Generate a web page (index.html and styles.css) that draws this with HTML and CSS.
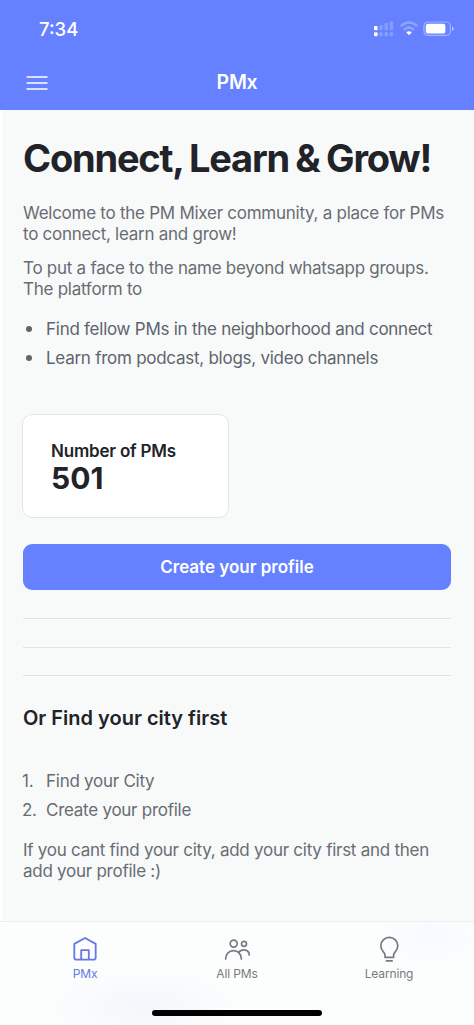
FILE: index.html
```
<!DOCTYPE html>
<html lang="en">
<head>
<meta charset="utf-8">
<title>PMx</title>
<link rel="stylesheet" href="styles.css">
</head>
<body>
<div class="app">
  <header class="header">
    <div class="status">
      <span class="time">7:34</span>
      <svg class="status-icons" width="84" height="20" viewBox="0 0 84 20" fill="none">
        <g fill="#fff">
          <rect x="1" y="6" width="3.6" height="4.2" rx="1"/>
          <rect x="1" y="12.2" width="3.6" height="4" rx="1"/>
          <g opacity=".22">
            <rect x="6.4" y="5" width="3.4" height="5.2" rx="1"/><rect x="6.4" y="12.2" width="3.4" height="4" rx="1"/>
            <rect x="11.6" y="3" width="3.4" height="7.2" rx="1"/><rect x="11.6" y="12.2" width="3.4" height="4" rx="1"/>
            <rect x="16.7" y="1.5" width="3.4" height="8.7" rx="1"/><rect x="16.7" y="12.2" width="3.4" height="4" rx="1"/>
          </g>
        </g>
        <path d="M27.8 6.2Q36 -1.3 44.2 6.2M31 9.9Q36 5.2 41 9.9" stroke="#fff" stroke-opacity=".28" stroke-width="2.4"/>
        <path d="M33.2 12.2Q36 10.2 38.8 12.2L36 15.2Z" fill="#fff"/>
        <rect x="51" y="2" width="26.4" height="13.4" rx="4" stroke="#fff" stroke-opacity=".4" stroke-width="1.2"/>
        <rect x="52.8" y="3.8" width="19.6" height="9.8" rx="2.2" fill="#fff"/>
        <path d="M79 6.3Q80.8 7 80.8 8.7T79 11.1Z" fill="#fff" opacity=".5"/>
      </svg>
    </div>
    <div class="nav">
      <svg class="menu" width="22" height="16" viewBox="0 0 22 16" stroke="#fff" stroke-width="1.7"><path d="M.5 2H21.5M.5 8H21.5M.5 14H21.5"/></svg>
      <span class="nav-title">PMx</span>
    </div>
  </header>
  <main class="content">
    <h1 class="title">Connect, Learn &amp; Grow!</h1>
    <p class="text">Welcome to the PM Mixer community, a place for PMs<br>to connect, learn and grow!</p>
    <p class="text">To put a face to the name beyond whatsapp groups.<br>The platform to</p>
    <ul class="list">
      <li><span class="marker"><i class="dot"></i></span><span>Find fellow PMs in the neighborhood and connect</span></li>
      <li><span class="marker"><i class="dot"></i></span><span>Learn from podcast, blogs, video channels</span></li>
    </ul>
    <section class="card">
      <div class="card-label">Number of PMs</div>
      <div class="card-value">501</div>
    </section>
    <button class="button">Create your profile</button>
    <div class="rules"><hr><hr><hr></div>
    <h2 class="subtitle">Or Find your city first</h2>
    <ol class="list steps">
      <li><span class="marker">1.</span><span>Find your City</span></li>
      <li><span class="marker">2.</span><span>Create your profile</span></li>
    </ol>
    <p class="text">If you cant find your city, add your city first and then<br>add your profile :)</p>
  </main>
  <nav class="tabs">
    <div class="tab-row">
      <a class="tab active">
        <svg width="28" height="28" viewBox="0 0 28 28" fill="none" stroke="currentColor" stroke-width="1.8" stroke-linejoin="round"><path d="M3.3 8.9 14 3 24.7 8.9V22.5Q24.7 24.7 22.5 24.7H5.5Q3.3 24.7 3.3 22.5ZM10.2 24.7V15.2H17.8V24.7"/></svg>
        <span>PMx</span>
      </a>
      <a class="tab">
        <svg width="28" height="28" viewBox="0 0 28 28" fill="none" stroke="currentColor" stroke-width="1.7" stroke-linecap="round"><circle cx="10.7" cy="8.6" r="3.5"/><circle cx="21" cy="8.8" r="2.5"/><path d="M2.6 24C2.6 19.2 5.7 15.7 10.5 15.7S18.4 19.2 18.4 24M15.8 17C20 13.4 26.2 14.7 26.2 20"/></svg>
        <span>All PMs</span>
      </a>
      <a class="tab">
        <svg width="28" height="28" viewBox="0 0 28 28" fill="none" stroke="currentColor" stroke-width="1.7" stroke-linejoin="round"><path d="M10 22.3V19.8C10 17.5 5.8 16 5.8 10.8A8.5 8.5 0 0 1 22.8 10.8C22.8 16 18.6 17.5 18.6 19.8V22.3ZM10.8 25.8H17.8"/></svg>
        <span>Learning</span>
      </a>
    </div>
    <div class="home-indicator"></div>
  </nav>
</div>
</body>
</html>
```
FILE: styles.css
```
* { box-sizing: border-box; }
body { margin: 0; font-family: Inter, "Liberation Sans", sans-serif; background: #fff; }
.app { width: 474px; height: 1025px; display: flex; flex-direction: column; overflow: hidden; }
.header { height: 110px; flex: none; background: #6681ff; color: #fff; }
.status { height: 56px; padding: 20px 17px 0 39px; display: flex; justify-content: space-between; }
.time { font-size: 18.5px; line-height: 18px; font-weight: 500; }
.nav { height: 54px; padding: 0 26px; display: grid; grid-template-columns: 22px 1fr 22px; align-items: center; }
.nav-title { margin-top: -2px; text-align: center; font-size: 19.5px; font-weight: 600; letter-spacing: -.3px; }
.content { flex: 1; margin-left: 2px; padding: 28px 23px 0 21px; background: #f7faf9; display: flex; flex-direction: column; }
.title { margin: 0 0 24px; font-size: 38px; line-height: 41px; font-weight: 700; letter-spacing: -1.2px; word-spacing: -1.4px; color: #212329; white-space: nowrap; }
.text { margin: 0 0 14px; font-size: 17px; line-height: 20.5px; letter-spacing: -.26px; color: #696c74; white-space: nowrap; }
.list { list-style: none; margin: 6px 0 0; padding: 0; font-size: 17px; line-height: 20.5px; letter-spacing: -.26px; color: #60646e; display: flex; flex-direction: column; gap: 8px; }
.list li { display: flex; white-space: nowrap; }
.marker { width: 24px; margin-left: -1px; flex: none; }
.dot { display: block; width: 6px; height: 6px; margin: 7px 0 0 4px; border-radius: 50%; background: #60646e; }
.card { width: 207px; height: 104px; margin: 46px 0 0 -1px; padding: 26px 28px; flex: none; background: #fff; border: 1px solid #e3e6e6; border-radius: 10px; color: #212329; }
.card-label { font-size: 17px; line-height: 20px; font-weight: 600; letter-spacing: -.2px; white-space: nowrap; }
.card-value { font-size: 30px; line-height: 34px; font-weight: 700; }
.button { height: 46px; margin: 26px 0 0; flex: none; border: 0; border-radius: 9px; background: #6681ff; color: #fff; font: 600 17px/20px Inter, sans-serif; }
.rules { margin-top: 28px; display: flex; flex-direction: column; gap: 27.5px; }
.rules hr { width: 100%; height: 1px; margin: 0; border: 0; background: #e1e4e4; }
.subtitle { margin: 29px 0 34px; font-size: 20px; line-height: 26px; font-weight: 600; color: #212329; }
.steps { margin: 6px 0 20px; color: #696c74; }
.tabs { height: 104px; flex: none; padding-top: 13px; border-top: 1px solid #eceff0; background: radial-gradient(ellipse 100px 40px at 145px 85px, #f3f7fb, transparent), radial-gradient(ellipse 55px 30px at 430px 15px, #f7f9ff, transparent), #fcfdfd; display: flex; flex-direction: column; align-items: center; }
.tab-row { width: 456px; height: 75px; display: grid; grid-template-columns: repeat(3, 1fr); }
.tab { display: flex; flex-direction: column; align-items: center; gap: 3px; color: #777a82; font-size: 12px; line-height: 15px; letter-spacing: -.15px; }
.active { color: #6478e6; }
.home-indicator { width: 170px; height: 6px; border-radius: 3px; background: #000; }
```
